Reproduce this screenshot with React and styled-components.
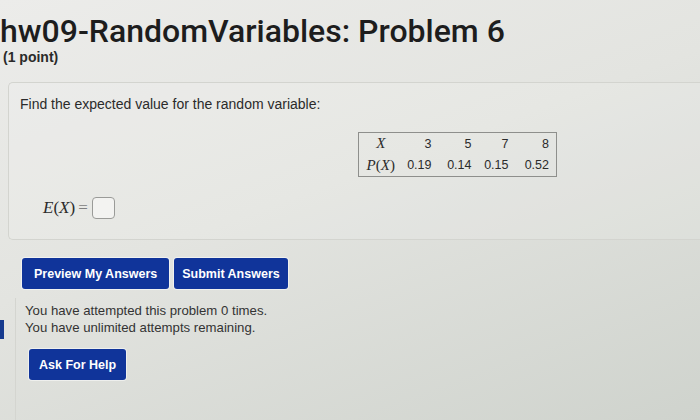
import styled, { createGlobalStyle } from "styled-components";

const GlobalStyle = createGlobalStyle`
  html, body {
    margin: 0;
    padding: 0;
  }
  body {
    width: 700px;
    height: 420px;
    overflow: hidden;
    font-family: "Liberation Sans", Arial, sans-serif;
    color: #222;
    background: linear-gradient(160deg, #ececea 0%, #e3e4e0 45%, #cfd3cd 100%);
  }
`;

const Page = styled.div`
  position: relative;
  width: 700px;
  height: 420px;
`;

const Header = styled.header`
  padding: 13px 0 0 0;
`;

const Title = styled.h1`
  margin: 0;
  font-family: Roboto, "Liberation Sans", Arial, sans-serif;
  font-size: 32px;
  font-weight: 500;
  color: #1d1d1d;
  line-height: 36px;
`;

const Points = styled.div`
  font-size: 14px;
  font-weight: 700;
  color: #2a2a2a;
  padding-left: 3px;
  line-height: 16px;
`;

const Body = styled.div`
  display: flex;
  margin-top: 17px;
`;

const Rail = styled.div`
  width: 8px;
  flex-shrink: 0;
`;

const Main = styled.main`
  flex: 1;
`;

const ProblemBox = styled.section`
  height: 158px;
  border: 1px solid #d3d4cf;
  border-right: none;
  border-radius: 5px 0 0 5px;
  background: rgba(255, 255, 255, 0.12);
  padding: 13px 0 0 11px;
  box-sizing: border-box;
`;

const Prompt = styled.p`
  margin: 0;
  font-size: 14px;
  color: #2b2b2b;
`;

const TableWrap = styled.div`
  display: flex;
  padding-left: 338px;
  margin-top: 20px;
`;

const Dist = styled.table`
  border: 1px solid #8e8f8c;
  border-collapse: collapse;
  font-size: 12.5px;
  color: #2b2b2b;
  td {
    padding: 0 4px 0 0;
    text-align: right;
    height: 22px;
    box-sizing: border-box;
  }
  td:first-child {
    text-align: center;
    font-family: "Liberation Serif", "Times New Roman", serif;
    font-size: 15px;
    padding: 0 2px;
    width: 44px;
  }
  td:nth-child(2) { width: 33px; }
  td:nth-child(3) { width: 40px; }
  td:nth-child(4) { width: 37px; }
  td:nth-child(5) { width: 44px; padding-right: 7px; }
`;

const Var = styled.i`
  font-style: italic;
`;

const AnswerRow = styled.div`
  display: flex;
  align-items: center;
  margin-top: 20px;
  padding-left: 23px;
  font-family: "Liberation Serif", "Times New Roman", serif;
  font-size: 17px;
  color: #2b2b2b;
  gap: 3px;
`;

const Eq = styled.span`
  color: #808080;
`;

const AnswerInput = styled.input`
  width: 23px;
  height: 22px;
  border: 1.5px solid #9a9b98;
  border-radius: 4px;
  background: #f3f3f1;
  padding: 0;
  margin-left: 1px;
  box-sizing: border-box;
`;

const Actions = styled.div`
  display: flex;
  gap: 5px;
  margin-top: 18px;
  padding-left: 14px;
`;

const Button = styled.button`
  background: #10349a;
  color: #fff;
  font-family: "Liberation Sans", Arial, sans-serif;
  font-weight: 700;
  font-size: 12.5px;
  border: none;
  border-radius: 3px;
  height: 31px;
  padding: 0 ${(p) => p.$pad || 11}px;
  box-shadow: 0 0 0 1px rgba(255, 255, 255, 0.5);
`;

const Attempts = styled.div`
  margin-top: 13px;
  padding-left: 17px;
  font-size: 13.2px;
  line-height: 17px;
  color: #333;
`;

const HelpRow = styled.div`
  margin-top: 13px;
  padding-left: 21px;
`;

const SideMarker = styled.div`
  position: absolute;
  left: 0;
  top: 320px;
  width: 4px;
  height: 19px;
  background: #163a8e;
`;

const LowerRail = styled.div`
  position: absolute;
  left: 15px;
  top: 298px;
  bottom: 0;
  width: 1px;
  background: #d4d5d0;
`;

export default function App() {
  return (
    <>
      <GlobalStyle />
      <Page>
        <Header>
          <Title>hw09-RandomVariables: Problem 6</Title>
          <Points>(1 point)</Points>
        </Header>
        <Body>
          <Rail />
          <Main>
            <ProblemBox>
              <Prompt>Find the expected value for the random variable:</Prompt>
              <TableWrap>
                <Dist>
                  <tbody>
                    <tr>
                      <td><Var>X</Var></td>
                      <td>3</td>
                      <td>5</td>
                      <td>7</td>
                      <td>8</td>
                    </tr>
                    <tr>
                      <td><Var>P</Var>(<Var>X</Var>)</td>
                      <td>0.19</td>
                      <td>0.14</td>
                      <td>0.15</td>
                      <td>0.52</td>
                    </tr>
                  </tbody>
                </Dist>
              </TableWrap>
              <AnswerRow>
                <span><Var>E</Var>(<Var>X</Var>)</span>
                <Eq>=</Eq>
                <AnswerInput type="text" />
              </AnswerRow>
            </ProblemBox>
            <Actions>
              <Button $pad={12}>Preview My Answers</Button>
              <Button $pad={8}>Submit Answers</Button>
            </Actions>
            <Attempts>
              <div>You have attempted this problem 0 times.</div>
              <div>You have unlimited attempts remaining.</div>
            </Attempts>
            <HelpRow>
              <Button $pad={10}>Ask For Help</Button>
            </HelpRow>
          </Main>
        </Body>
        <SideMarker />
        <LowerRail />
      </Page>
    </>
  );
}
